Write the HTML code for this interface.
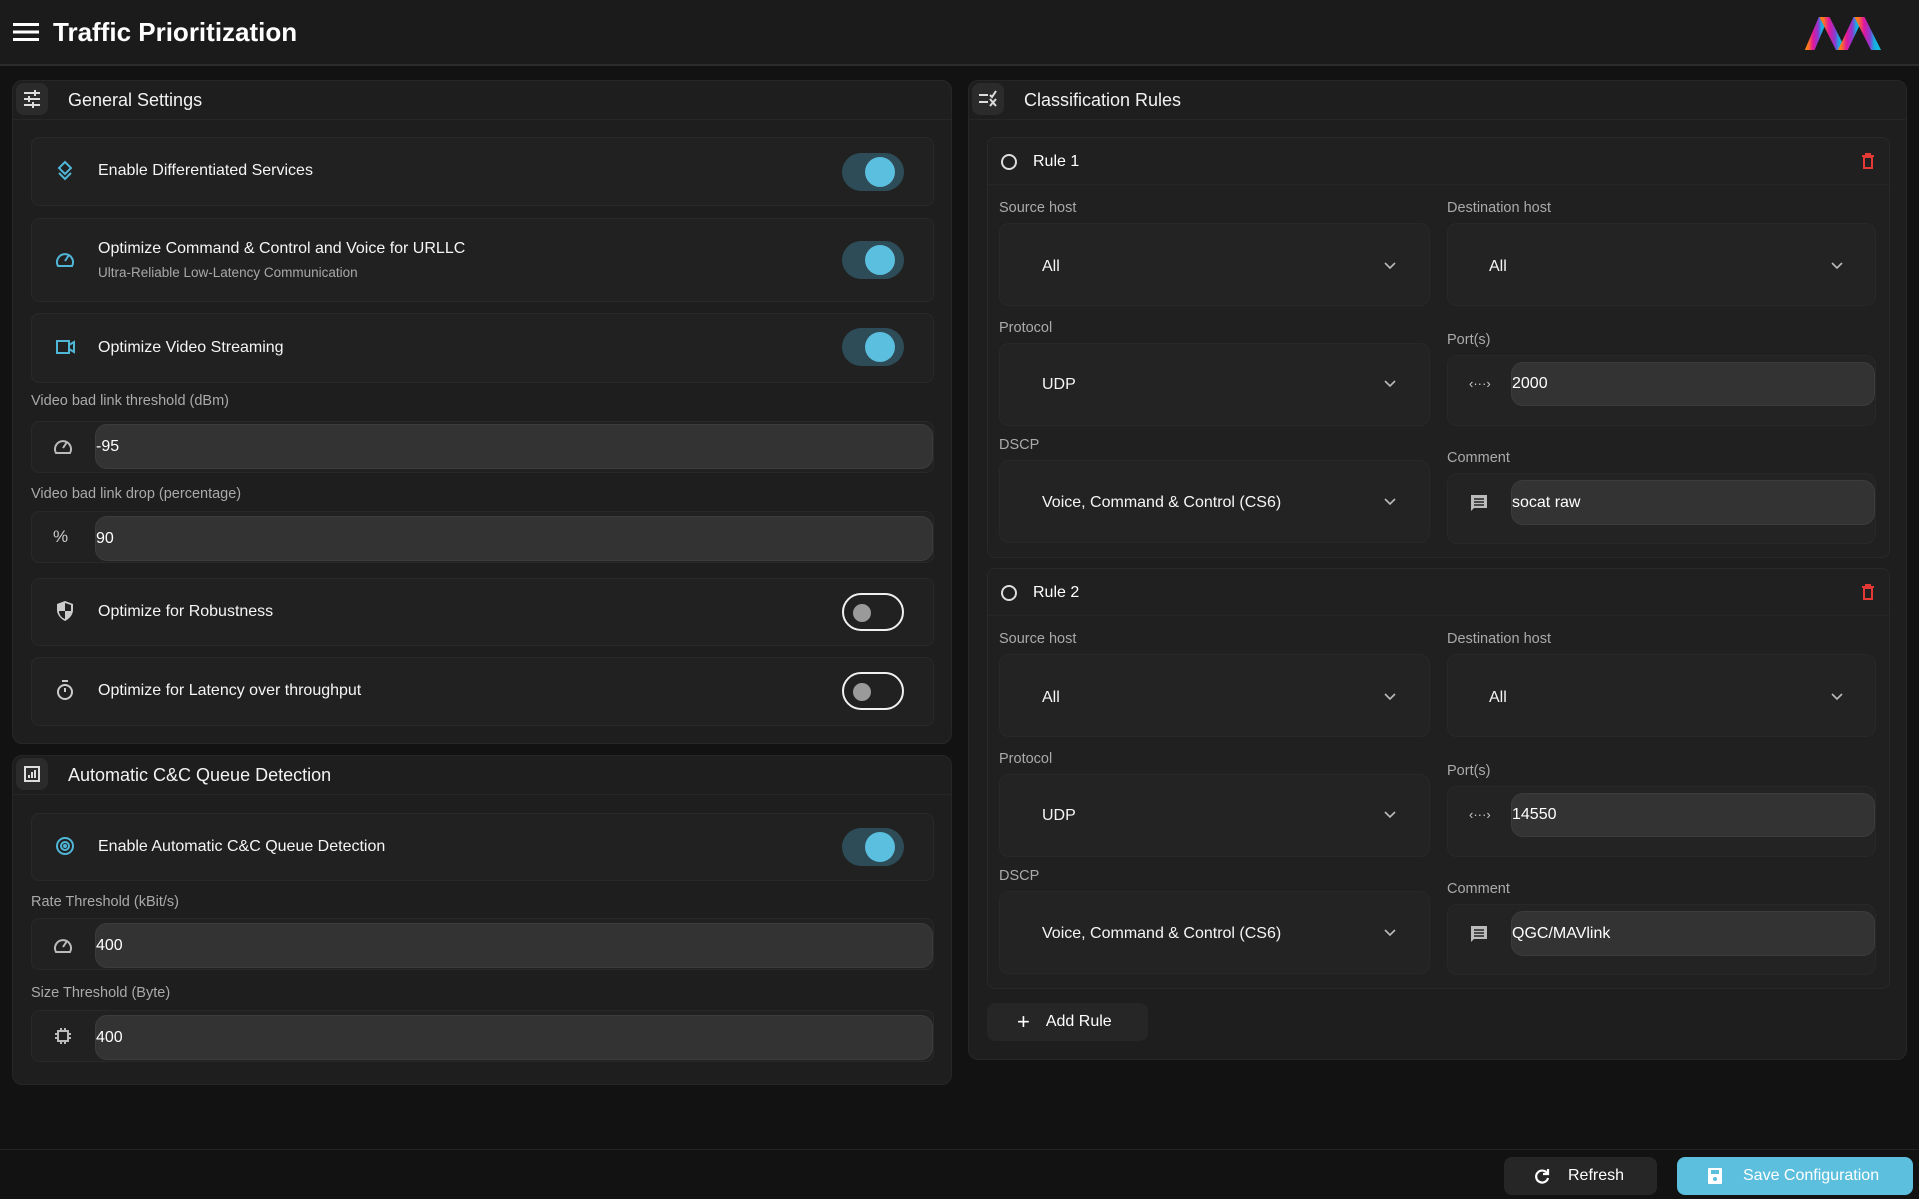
<!DOCTYPE html>
<html><head><meta charset="utf-8"><style>
*{box-sizing:border-box;margin:0;padding:0}
body{width:1919px;height:1199px;background:#121212;font-family:"Liberation Sans",sans-serif;color:#fff;position:relative;overflow:hidden}
.a{position:absolute}
.hdr{left:0;top:0;width:1919px;height:66px;background:#1b1b1b;border-bottom:2px solid #2c2c2c}
.panel{background:#1e1e1e;border:1px solid #262626;border-radius:10px}
.ptitle{font-size:18px;color:#f2f2f2}
.ibox{width:32px;height:32px;background:#2b2b2b;border-radius:8px;display:flex;align-items:center;justify-content:center}
.sep{height:1px;background:#262626}
.row{background:#212121;border:1px solid #292929;border-radius:8px}
.lbl{font-size:16px;color:#f5f5f5}
.sub{font-size:13.5px;color:#a8a8a8}
.flbl{font-size:14.5px;color:#aaa}
.tog{width:62px;height:38px;border-radius:19px;background:#2d4c57}
.tog::after{content:"";position:absolute;right:9px;top:4px;width:30px;height:30px;border-radius:50%;background:#5bbfdf}
.togoff{width:62px;height:38px;border-radius:19px;border:2.5px solid #f0f0f0;background:transparent}
.togoff::after{content:"";position:absolute;left:9px;top:9px;width:18px;height:18px;border-radius:50%;background:#9a9a9a}
.inp{background:#333;border:1px solid #3c3c3c;border-radius:12px;font-size:16px;color:#fff;display:flex;align-items:center;padding-left:0}
.sel{background:#232323;border:1px solid #282828;border-radius:10px}
.seltxt{font-size:16px;color:#f5f5f5}
.chev{width:12px;height:8px}
.btn{border-radius:8px;font-size:16px;display:flex;align-items:center}
</style></head><body>
<div class="a hdr"></div>
<svg class="a" style="left:13px;top:22px" width="26" height="20" viewBox="0 0 26 20"><rect x="0" y="1" width="26" height="3" fill="#fff"/><rect x="0" y="8.5" width="26" height="3" fill="#fff"/><rect x="0" y="16" width="26" height="3" fill="#fff"/></svg>
<div class="a" style="left:53px;top:17px;font-size:26px;font-weight:bold">Traffic Prioritization</div>
<svg class="a" style="left:1800px;top:10px" width="90" height="50" viewBox="0 0 90 50"><defs><linearGradient id="g" x1="0" x2="1"><stop offset="0" stop-color="#ff7a1a"/><stop offset="0.3" stop-color="#e0169f"/><stop offset="0.6" stop-color="#8a3bd0"/><stop offset="0.8" stop-color="#1aa8e0"/><stop offset="1" stop-color="#12b8e0"/></linearGradient><clipPath id="c"><rect x="0" y="7" width="90" height="33"/></clipPath></defs><g clip-path="url(#c)" stroke="url(#g)" stroke-width="9" fill="none" stroke-linecap="butt"><path d="M8 44 L25 4"/><path d="M23 4 L43 44"/><path d="M41 44 L60 4"/><path d="M58 4 L78 44"/></g></svg>

<!-- General settings -->
<div class="a panel" style="left:12px;top:80px;width:940px;height:664px"></div>
<div class="a ibox" style="left:16px;top:83px"><svg width="20" height="20" viewBox="0 0 20 20" fill="#ddd"><rect x="2" y="3" width="16" height="2"/><rect x="2" y="9" width="16" height="2"/><rect x="2" y="15" width="16" height="2"/><rect x="12" y="1" width="2" height="6"/><rect x="6" y="7" width="2" height="6"/><rect x="10" y="13" width="2" height="6"/></svg></div>
<div class="a ptitle" style="left:68px;top:90px">General Settings</div>
<div class="a sep" style="left:13px;top:119px;width:938px"></div>

<div class="a row" style="left:31px;top:137px;width:903px;height:69px"></div>
<svg class="a" style="left:55px;top:160px" width="20" height="22" viewBox="0 0 20 22" fill="none" stroke="#4fb6d8" stroke-width="2"><path d="M10 2 L16 8 L10 14 L4 8 Z"/><path d="M4 13 L10 19 L16 13"/></svg>
<div class="a lbl" style="left:98px;top:162px">Enable Differentiated Services</div>
<div class="a tog" style="left:842px;top:153px"></div>

<div class="a row" style="left:31px;top:218px;width:903px;height:84px"></div>
<svg class="a" style="left:54px;top:249px" width="22" height="20" viewBox="0 0 22 20" fill="none" stroke="#4fb6d8" stroke-width="2"><path d="M4 17 A8 8 0 1 1 18 17 Z"/><path d="M11 12 L15 6"/></svg>
<div class="a lbl" style="left:98px;top:240px">Optimize Command &amp; Control and Voice for URLLC</div>
<div class="a sub" style="left:98px;top:265px">Ultra-Reliable Low-Latency Communication</div>
<div class="a tog" style="left:842px;top:241px"></div>

<div class="a row" style="left:31px;top:313px;width:903px;height:70px"></div>
<svg class="a" style="left:55px;top:338px" width="22" height="18" viewBox="0 0 22 18" fill="none" stroke="#4fb6d8" stroke-width="2"><rect x="2" y="3" width="12" height="12"/><path d="M14 7 L19 4 L19 14 L14 11"/></svg>
<div class="a lbl" style="left:98px;top:339px">Optimize Video Streaming</div>
<div class="a tog" style="left:842px;top:328px"></div>

<div class="a flbl" style="left:31px;top:393px">Video bad link threshold (dBm)</div>
<div class="a row" style="left:31px;top:421px;width:903px;height:52px"></div>
<svg class="a" style="left:52px;top:436px" width="22" height="20" viewBox="0 0 22 20" fill="none" stroke="#bbb" stroke-width="2"><path d="M4 17 A8 8 0 1 1 18 17 Z"/><path d="M11 12 L15 6"/></svg>
<div class="a inp" style="left:95px;top:424px;width:838px;height:45px">-95</div>

<div class="a flbl" style="left:31px;top:486px">Video bad link drop (percentage)</div>
<div class="a row" style="left:31px;top:511px;width:903px;height:52px"></div>
<div class="a" style="left:53px;top:527px;font-size:17px;color:#ccc">%</div>
<div class="a inp" style="left:95px;top:516px;width:838px;height:45px">90</div>

<div class="a row" style="left:31px;top:578px;width:903px;height:68px"></div>
<svg class="a" style="left:56px;top:600px" width="18" height="22" viewBox="0 0 18 22"><path d="M9 1 L17 4 L17 10 C17 15 13 19 9 21 C5 19 1 15 1 10 L1 4 Z" fill="#ccc"/><path d="M9 3 L9 11 L15 11 L15 5 Z M9 11 L3 11 C3 15 6 18 9 19 Z" fill="#222"/></svg>
<div class="a lbl" style="left:98px;top:603px">Optimize for Robustness</div>
<div class="a togoff" style="left:842px;top:593px"></div>

<div class="a row" style="left:31px;top:657px;width:903px;height:69px"></div>
<svg class="a" style="left:55px;top:679px" width="20" height="22" viewBox="0 0 20 22" fill="none" stroke="#ccc" stroke-width="2"><circle cx="10" cy="13" r="7"/><path d="M7 2 L13 2 M10 13 L10 9"/></svg>
<div class="a lbl" style="left:98px;top:682px">Optimize for Latency over throughput</div>
<div class="a togoff" style="left:842px;top:672px"></div>

<!-- Auto C&C -->
<div class="a panel" style="left:12px;top:755px;width:940px;height:330px"></div>
<div class="a ibox" style="left:16px;top:758px"><svg width="18" height="18" viewBox="0 0 18 18" fill="none" stroke="#ddd" stroke-width="2"><rect x="2" y="2" width="14" height="14"/><path d="M6 13 V10 M9 13 V7 M12 13 V5"/></svg></div>
<div class="a ptitle" style="left:68px;top:765px">Automatic C&amp;C Queue Detection</div>
<div class="a sep" style="left:13px;top:794px;width:938px"></div>
<div class="a row" style="left:31px;top:813px;width:903px;height:68px"></div>
<svg class="a" style="left:55px;top:836px" width="20" height="20" viewBox="0 0 20 20" fill="none" stroke="#4fb6d8" stroke-width="2"><circle cx="10" cy="10" r="8"/><circle cx="10" cy="10" r="4"/><circle cx="10" cy="10" r="1" fill="#4fb6d8"/></svg>
<div class="a lbl" style="left:98px;top:838px">Enable Automatic C&amp;C Queue Detection</div>
<div class="a tog" style="left:842px;top:828px"></div>

<div class="a flbl" style="left:31px;top:894px">Rate Threshold (kBit/s)</div>
<div class="a row" style="left:31px;top:918px;width:903px;height:52px"></div>
<svg class="a" style="left:52px;top:935px" width="22" height="20" viewBox="0 0 22 20" fill="none" stroke="#bbb" stroke-width="2"><path d="M4 17 A8 8 0 1 1 18 17 Z"/><path d="M11 12 L15 6"/></svg>
<div class="a inp" style="left:95px;top:923px;width:838px;height:45px">400</div>
<div class="a flbl" style="left:31px;top:985px">Size Threshold (Byte)</div>
<div class="a row" style="left:31px;top:1010px;width:903px;height:52px"></div>
<svg class="a" style="left:54px;top:1027px" width="18" height="18" viewBox="0 0 18 18" fill="none" stroke="#bbb" stroke-width="2"><rect x="4" y="4" width="10" height="10"/><path d="M7 1V4M11 1V4M7 14V17M11 14V17M1 7H4M1 11H4M14 7H17M14 11H17"/></svg>
<div class="a inp" style="left:95px;top:1015px;width:838px;height:45px">400</div>

<!-- Classification Rules -->
<div class="a panel" style="left:968px;top:80px;width:939px;height:980px"></div>
<div class="a ibox" style="left:972px;top:83px"><svg width="20" height="18" viewBox="0 0 20 18" fill="none" stroke="#ddd" stroke-width="2"><path d="M1 5H10M1 12H10M12 9L18 16M18 9L12 16M12 5L14 7L18 1"/></svg></div>
<div class="a ptitle" style="left:1024px;top:90px">Classification Rules</div>
<div class="a sep" style="left:969px;top:119px;width:937px"></div>

<div class="a" style="left:987px;top:137px;width:903px;height:421px">
 <div class="a row" style="left:0;top:0;width:903px;height:421px;background:#202020"></div>
 <div class="a" style="left:14px;top:17px;width:16px;height:16px;border:2px solid #ddd;border-radius:50%"></div>
 <div class="a" style="left:46px;top:16px;font-size:16px">Rule 1</div>
 <svg class="a" style="left:875px;top:16px" width="12" height="16" viewBox="0 0 12 16" fill="none" stroke="#e53935" stroke-width="2"><path d="M0 3H12M4 3V1H8V3"/><rect x="2" y="4" width="8" height="11"/></svg>
 <div class="a sep" style="left:1px;top:47px;width:901px"></div>
 <div class="a flbl" style="left:12px;top:63px">Source host</div>
 <div class="a sel" style="left:12px;top:86px;width:431px;height:83px"></div>
 <div class="a seltxt" style="left:55px;top:121px">All</div>
 <svg class="a chev" style="left:397px;top:125px" viewBox="0 0 12 8" fill="none" stroke="#bbb" stroke-width="1.6"><path d="M1 1L6 6L11 1"/></svg>
 <div class="a flbl" style="left:460px;top:63px">Destination host</div>
 <div class="a sel" style="left:460px;top:86px;width:429px;height:83px"></div>
 <div class="a seltxt" style="left:502px;top:121px">All</div>
 <svg class="a chev" style="left:844px;top:125px" viewBox="0 0 12 8" fill="none" stroke="#bbb" stroke-width="1.6"><path d="M1 1L6 6L11 1"/></svg>
 <div class="a flbl" style="left:12px;top:183px">Protocol</div>
 <div class="a sel" style="left:12px;top:206px;width:431px;height:83px"></div>
 <div class="a seltxt" style="left:55px;top:239px">UDP</div>
 <svg class="a chev" style="left:397px;top:243px" viewBox="0 0 12 8" fill="none" stroke="#bbb" stroke-width="1.6"><path d="M1 1L6 6L11 1"/></svg>
 <div class="a flbl" style="left:460px;top:195px">Port(s)</div>
 <div class="a sel" style="left:460px;top:218px;width:429px;height:71px"></div>
 <div class="a" style="left:482px;top:239px;font-size:13px;color:#ccc">&#8249;&middot;&middot;&middot;&#8250;</div>
 <div class="a inp" style="left:524px;top:225px;width:364px;height:44px">2000</div>
 <div class="a flbl" style="left:12px;top:300px">DSCP</div>
 <div class="a sel" style="left:12px;top:323px;width:431px;height:83px"></div>
 <div class="a seltxt" style="left:55px;top:357px">Voice, Command &amp; Control (CS6)</div>
 <svg class="a chev" style="left:397px;top:361px" viewBox="0 0 12 8" fill="none" stroke="#bbb" stroke-width="1.6"><path d="M1 1L6 6L11 1"/></svg>
 <div class="a flbl" style="left:460px;top:313px">Comment</div>
 <div class="a sel" style="left:460px;top:336px;width:429px;height:71px"></div>
 <svg class="a" style="left:483px;top:357px" width="18" height="18" viewBox="0 0 18 18"><path d="M1 1H17V14H4L1 17Z" fill="#bbb"/><path d="M4 5H14M4 8H14M4 11H14" stroke="#222" stroke-width="1.5"/></svg>
 <div class="a inp" style="left:524px;top:343px;width:364px;height:45px">socat raw</div>
</div>

<div class="a" style="left:987px;top:568px;width:903px;height:421px">
 <div class="a row" style="left:0;top:0;width:903px;height:421px;background:#202020"></div>
 <div class="a" style="left:14px;top:17px;width:16px;height:16px;border:2px solid #ddd;border-radius:50%"></div>
 <div class="a" style="left:46px;top:16px;font-size:16px">Rule 2</div>
 <svg class="a" style="left:875px;top:16px" width="12" height="16" viewBox="0 0 12 16" fill="none" stroke="#e53935" stroke-width="2"><path d="M0 3H12M4 3V1H8V3"/><rect x="2" y="4" width="8" height="11"/></svg>
 <div class="a sep" style="left:1px;top:47px;width:901px"></div>
 <div class="a flbl" style="left:12px;top:63px">Source host</div>
 <div class="a sel" style="left:12px;top:86px;width:431px;height:83px"></div>
 <div class="a seltxt" style="left:55px;top:121px">All</div>
 <svg class="a chev" style="left:397px;top:125px" viewBox="0 0 12 8" fill="none" stroke="#bbb" stroke-width="1.6"><path d="M1 1L6 6L11 1"/></svg>
 <div class="a flbl" style="left:460px;top:63px">Destination host</div>
 <div class="a sel" style="left:460px;top:86px;width:429px;height:83px"></div>
 <div class="a seltxt" style="left:502px;top:121px">All</div>
 <svg class="a chev" style="left:844px;top:125px" viewBox="0 0 12 8" fill="none" stroke="#bbb" stroke-width="1.6"><path d="M1 1L6 6L11 1"/></svg>
 <div class="a flbl" style="left:12px;top:183px">Protocol</div>
 <div class="a sel" style="left:12px;top:206px;width:431px;height:83px"></div>
 <div class="a seltxt" style="left:55px;top:239px">UDP</div>
 <svg class="a chev" style="left:397px;top:243px" viewBox="0 0 12 8" fill="none" stroke="#bbb" stroke-width="1.6"><path d="M1 1L6 6L11 1"/></svg>
 <div class="a flbl" style="left:460px;top:195px">Port(s)</div>
 <div class="a sel" style="left:460px;top:218px;width:429px;height:71px"></div>
 <div class="a" style="left:482px;top:239px;font-size:13px;color:#ccc">&#8249;&middot;&middot;&middot;&#8250;</div>
 <div class="a inp" style="left:524px;top:225px;width:364px;height:44px">14550</div>
 <div class="a flbl" style="left:12px;top:300px">DSCP</div>
 <div class="a sel" style="left:12px;top:323px;width:431px;height:83px"></div>
 <div class="a seltxt" style="left:55px;top:357px">Voice, Command &amp; Control (CS6)</div>
 <svg class="a chev" style="left:397px;top:361px" viewBox="0 0 12 8" fill="none" stroke="#bbb" stroke-width="1.6"><path d="M1 1L6 6L11 1"/></svg>
 <div class="a flbl" style="left:460px;top:313px">Comment</div>
 <div class="a sel" style="left:460px;top:336px;width:429px;height:71px"></div>
 <svg class="a" style="left:483px;top:357px" width="18" height="18" viewBox="0 0 18 18"><path d="M1 1H17V14H4L1 17Z" fill="#bbb"/><path d="M4 5H14M4 8H14M4 11H14" stroke="#222" stroke-width="1.5"/></svg>
 <div class="a inp" style="left:524px;top:343px;width:364px;height:45px">QGC/MAVlink</div>
</div>

<div class="a btn" style="left:987px;top:1003px;width:161px;height:38px;background:#262626;padding-left:30px"><span style="font-size:22px;margin-right:16px;line-height:1">+</span>Add Rule</div>

<div class="a sep" style="left:0;top:1149px;width:1919px;background:#242424"></div>
<div class="a btn" style="left:1504px;top:1157px;width:153px;height:38px;background:#262626;padding-left:30px"><svg width="16" height="18" viewBox="0 0 16 18" fill="none" stroke="#fff" stroke-width="2.2" style="margin-right:18px"><path d="M13 6 A6 6 0 1 0 14 11"/><path d="M14 2V7H9"/></svg>Refresh</div>
<div class="a btn" style="left:1677px;top:1157px;width:236px;height:38px;background:#5bbfdd;padding-left:30px"><svg width="16" height="18" viewBox="0 0 16 18" style="margin-right:20px"><rect x="1" y="1" width="14" height="16" rx="1" fill="#fff"/><rect x="4" y="3" width="8" height="4" fill="#5bbfdd"/><circle cx="8" cy="12" r="2" fill="#5bbfdd"/></svg>Save Configuration</div>
</body></html>
